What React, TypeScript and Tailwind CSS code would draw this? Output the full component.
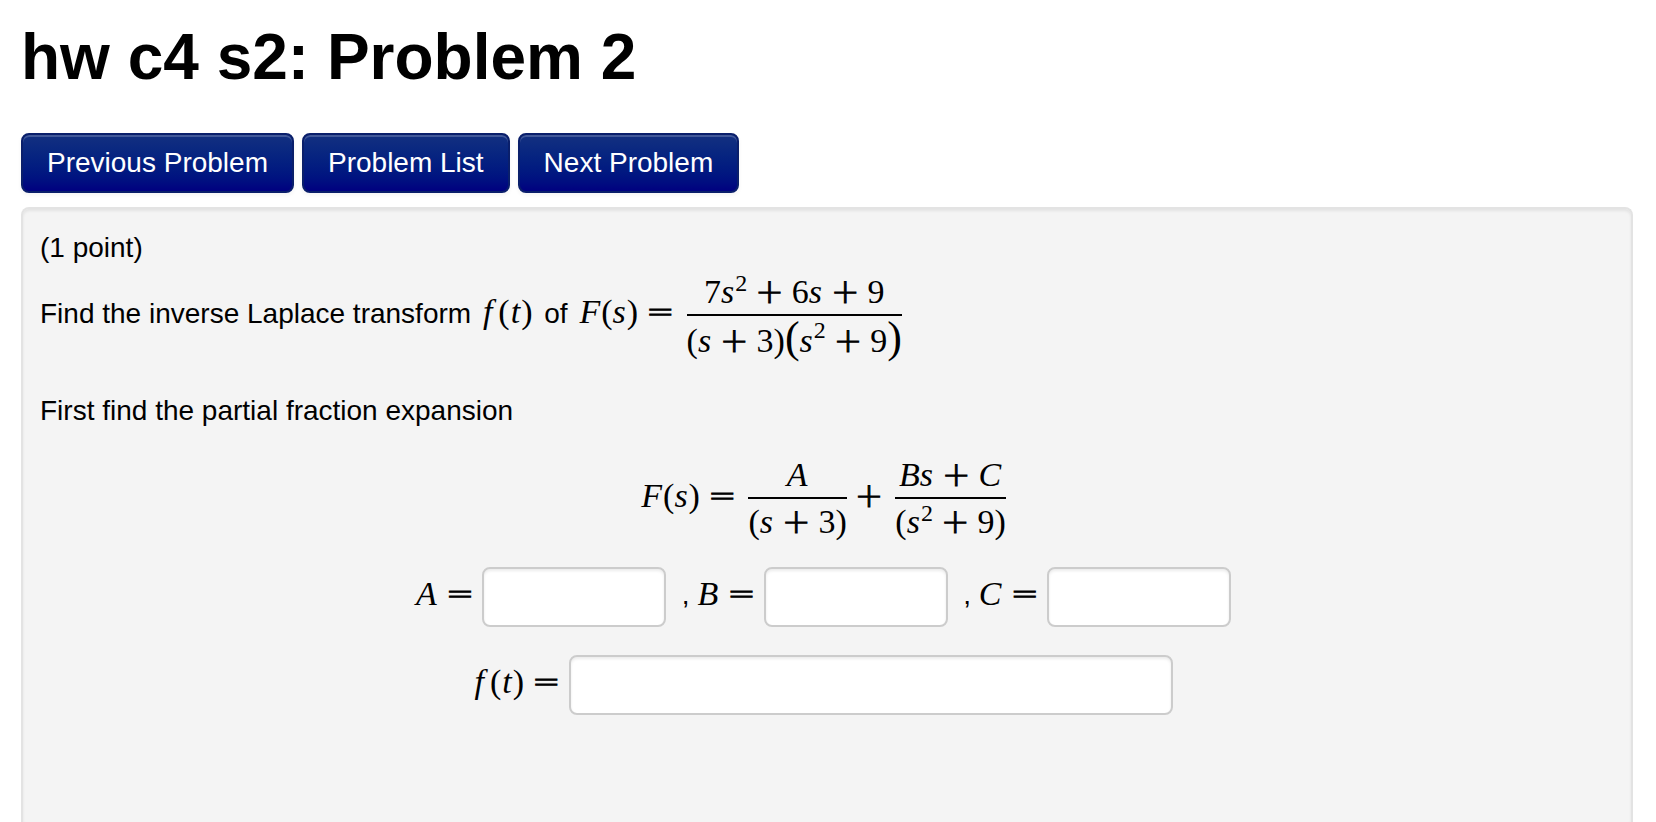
import type { ReactNode } from 'react';

const navItems = ['Previous Problem', 'Problem List', 'Next Problem'];

/* Italic variable */
function V({ children }: { children: ReactNode }) {
  return <i className="pr-px">{children}</i>;
}

/* f(t), the slanted f needs room before the bracket */
function FofT() {
  return (
    <>
      <i className="pr-1.5">f</i>(<i className="px-px">t</i>)
    </>
  );
}

/* Binary operator or relation, with space on both sides */
function Op({ children }: { children: ReactNode }) {
  return (
    <span className="mx-2 font-['DejaVu_Sans',sans-serif] font-extralight [-webkit-text-stroke:1px_#000]">
      {children}
    </span>
  );
}

function Sup({ children }: { children: ReactNode }) {
  return <span className="self-start text-2xl leading-5">{children}</span>;
}

function MathText({ children }: { children: ReactNode }) {
  return (
    <span className="inline-flex items-baseline whitespace-pre font-['Liberation_Serif',serif] text-[34px] leading-9">
      {children}
    </span>
  );
}

function Frac({ top, bottom }: { top: ReactNode; bottom: ReactNode }) {
  return (
    <span className="inline-flex flex-col">
      <span className="flex h-12 items-end justify-center pb-1">
        <MathText>{top}</MathText>
      </span>
      <span className="h-0.5 bg-black" />
      <span className="flex h-12 items-start justify-center pt-1">
        <MathText>{bottom}</MathText>
      </span>
    </span>
  );
}

function Answer({ id, label, wide }: { id: string; label: ReactNode; wide?: boolean }) {
  return (
    <>
      <label htmlFor={id} className="pb-1">
        <MathText>{label}</MathText>
      </label>
      <input
        id={id}
        type="text"
        className={`h-[60px] rounded-lg border-2 border-[#ccc] bg-white px-3 shadow-[inset_0_2px_3px_rgba(0,0,0,0.08)] outline-none ${
          wide ? 'w-[604px]' : 'w-[184px]'
        }`}
      />
    </>
  );
}

export default function App() {
  return (
    <div className="flex min-h-screen flex-col bg-white pl-[21px] pr-[23px] font-['Liberation_Sans',Arial,sans-serif] text-[28px] leading-10 text-black">
      <h1 className="pt-[21px] text-[64px] font-bold leading-[72px]">hw c4 s2: Problem 2</h1>

      <nav className="mt-10 flex gap-2">
        {navItems.map((item) => (
          <button
            key={item}
            type="button"
            className="h-[60px] rounded-lg border-2 border-[#0a1f6b] bg-linear-to-b from-[#133080] to-[#000080] px-6 text-white shadow-[inset_0_2px_0_rgba(255,255,255,0.2),0_2px_4px_rgba(0,0,0,0.05)]"
          >
            {item}
          </button>
        ))}
      </nav>

      <main className="mt-3.5 flex-1 rounded-t-lg border-2 border-b-0 border-[#e3e3e3] bg-[#f4f4f4] pb-10 pl-[17px] pr-6 pt-[19px] shadow-[inset_0_2px_3px_rgba(0,0,0,0.07)]">
        <p>(1 point)</p>

        <p className="-mt-0.5 flex items-center">
          <span className="flex items-baseline whitespace-pre pb-1">
            {'Find the inverse Laplace transform '}
            <span className="px-1">
              <MathText>
                <FofT />
              </MathText>
            </span>
            {' of '}
            <span className="px-1">
              <MathText>
                <V>F</V>(<V>s</V>)<Op>=</Op>
              </MathText>
            </span>
          </span>
          <Frac
            top={
              <>
                7<V>s</V>
                <Sup>2</Sup>
                <Op>+</Op>6<V>s</V>
                <Op>+</Op>9
              </>
            }
            bottom={
              <>
                (<V>s</V>
                <Op>+</Op>3)
                <span className="text-[44px]">(</span>
                <V>s</V>
                <Sup>2</Sup>
                <Op>+</Op>9
                <span className="text-[44px]">)</span>
              </>
            }
          />
        </p>

        <p className="mt-[27px]">First find the partial fraction expansion</p>

        <div className="mt-[18px] flex items-center justify-center">
          <span className="pb-0.5 pr-1">
            <MathText>
              <V>F</V>(<V>s</V>)<Op>=</Op>
            </MathText>
          </span>
          <Frac
            top={<V>A</V>}
            bottom={
              <>
                (<V>s</V>
                <Op>+</Op>3)
              </>
            }
          />
          <span className="pb-0.5 pr-1">
            <MathText>
              <Op>+</Op>
            </MathText>
          </span>
          <Frac
            top={
              <>
                <V>Bs</V>
                <Op>+</Op>
                <V>C</V>
              </>
            }
            bottom={
              <>
                (<V>s</V>
                <Sup>2</Sup>
                <Op>+</Op>9)
              </>
            }
          />
        </div>

        <form className="mt-5">
          <div className="flex items-center justify-center whitespace-pre">
            <Answer id="coef-a" label={<><V>A</V><Op>=</Op></>} />
            <span className="pb-1">{'  , '}</span>
            <Answer id="coef-b" label={<><V>B</V><Op>=</Op></>} />
            <span className="pb-1">{'  , '}</span>
            <Answer id="coef-c" label={<><V>C</V><Op>=</Op></>} />
          </div>
          <div className="mt-7 flex items-center justify-center">
            <Answer id="inverse" wide label={<><FofT /><Op>=</Op></>} />
          </div>
        </form>
      </main>
    </div>
  );
}
